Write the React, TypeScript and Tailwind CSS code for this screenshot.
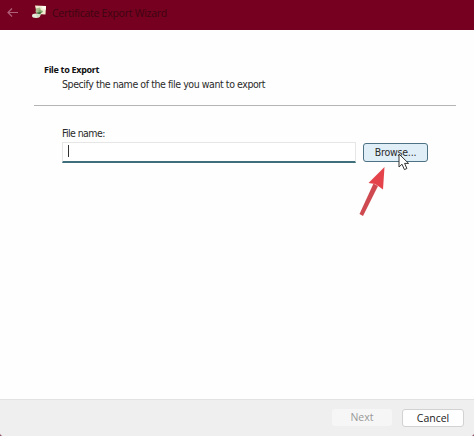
import { useState } from 'react'

// ─── Icons ───────────────────────────────────────────────────────────────────

function BackIcon() {
  return (
    <svg width="12" height="11" viewBox="0 0 12 11" fill="none" stroke="#b0607b" strokeWidth="1.2">
      <path d="M11 5.5H1M5 1.5 1 5.5 5 9.5" />
    </svg>
  )
}

function CertificateIcon() {
  return (
    <svg width="15" height="14" viewBox="0 0 15 14">
      <path d="M3 .5 14 1 13.5 9.5 5 9Z" fill="#f3ead2" />
      <path d="M9 1h5l-.3 4L11 4Z" fill="#fffaf0" />
      <path d="M4 3.5 8 2.5 9 5 5 8 3.5 7Z" fill="#a9bd8e" />
      <path d="M7 4.5 11 6 10 8 6 8Z" fill="#7fa36b" />
      <path d="M5 7.5 9 7 8.5 9.5 5 9.5Z" fill="#3d6b3c" />
      <ellipse cx="4" cy="10.8" rx="4" ry="2.2" fill="#e4ead9" />
      <path d="M4 9.5 9 9 8 11.5 5 12Z" fill="#cfdcc0" />
    </svg>
  )
}

function Pointer() {
  return (
    <svg className="absolute left-[35px] top-[10px]" width="13" height="19" viewBox="0 0 13 19">
      <path
        d="M1 1V14L4 11.2 6.4 16.6 8.9 15.5 6.6 10.4H10.6Z"
        fill="#fff"
        stroke="#333"
        strokeWidth="1"
        strokeLinejoin="round"
      />
    </svg>
  )
}

function RedArrow() {
  return (
    <svg className="absolute -left-[5px] top-[23px]" width="30" height="52" viewBox="0 0 30 52">
      <path d="M15.5 17.5 1.5 48 5 50 20 20Z" fill="#cf4950" />
      <path d="M26.5 1 10.5 17 17 18 19.5 19.5 25 23.5Z" fill="#e5434b" />
    </svg>
  )
}

// ─── Wizard ──────────────────────────────────────────────────────────────────

export default function App() {
  const [fileName, setFileName] = useState('')

  return (
    <div className="bg-[#8f5566]">
      <div className="flex h-[436px] w-[474px] flex-col overflow-hidden rounded-b-[4px] bg-[#fefefe] font-['DejaVu_Sans_Condensed','DejaVu_Sans',sans-serif] text-[10.5px] text-[#2a2a2a]">
        <header className="flex h-[30px] shrink-0 items-start bg-[#76001f] pl-[7px]">
          <div className="pt-[7px]">
            <BackIcon />
          </div>
          <div className="ml-[13px] pt-[5px]">
            <CertificateIcon />
          </div>
          <h1 className="ml-[5px] mt-[5px] whitespace-nowrap font-['Open_Sans',sans-serif] text-[10.5px] leading-4 tracking-[-0.25px] text-[#3d0612]">
            Certificate Export Wizard
          </h1>
        </header>

        <main className="flex-1">
          <section className="ml-[34px] mr-[18px] h-[76px] border-b border-[#b4b4b4] pt-[33px]">
            <h2 className="ml-[10px] whitespace-nowrap font-['Noto_Sans',sans-serif] text-[9px] font-bold leading-[14px] tracking-[-0.3px] text-[#111]">
              File to Export
            </h2>
            <p className="ml-7 whitespace-nowrap leading-[14px] tracking-[-0.43px]">
              Specify the name of the file you want to export
            </p>
          </section>

          <section className="pl-[62px] pt-5">
            <label htmlFor="file" className="block h-4 leading-[15px] tracking-[-0.6px]">
              File name:
            </label>
            <div className="flex">
              <div className="flex h-[21px] w-[294px] items-start border border-b-2 border-[#e6e6e6] border-b-[#3f6f7a] bg-white pl-[5px] pt-0.5">
                <span className="h-3 w-px shrink-0 bg-[#333]" />
                <input
                  id="file"
                  value={fileName}
                  onChange={(e) => setFileName(e.target.value)}
                  className="min-w-0 flex-1 outline-none"
                />
              </div>
              <div className="relative ml-[7px] mt-px h-5 w-[65px]">
                <button className="block h-[19px] w-full rounded-[3px] border border-[#4d7284] bg-[#e0eef8] leading-[17px] tracking-[-0.2px]">
                  Browse...
                </button>
                <Pointer />
                <RedArrow />
              </div>
            </div>
          </section>
        </main>

        <footer className="flex h-[37px] shrink-0 justify-end gap-[10px] border-t border-[#e2e2e2] bg-[#efefef] pr-[10px] pt-[9px] font-['Open_Sans',sans-serif] text-[10.5px]">
          <button disabled className="h-[17px] w-[60px] rounded-[3px] bg-[#f6f6f6] leading-[17px] text-[#999]">
            Next
          </button>
          <button className="h-[18px] w-[62px] rounded-[3px] border border-[#d2d2d2] bg-[#fefefe] leading-4 text-[#222]">
            Cancel
          </button>
        </footer>
      </div>
    </div>
  )
}
